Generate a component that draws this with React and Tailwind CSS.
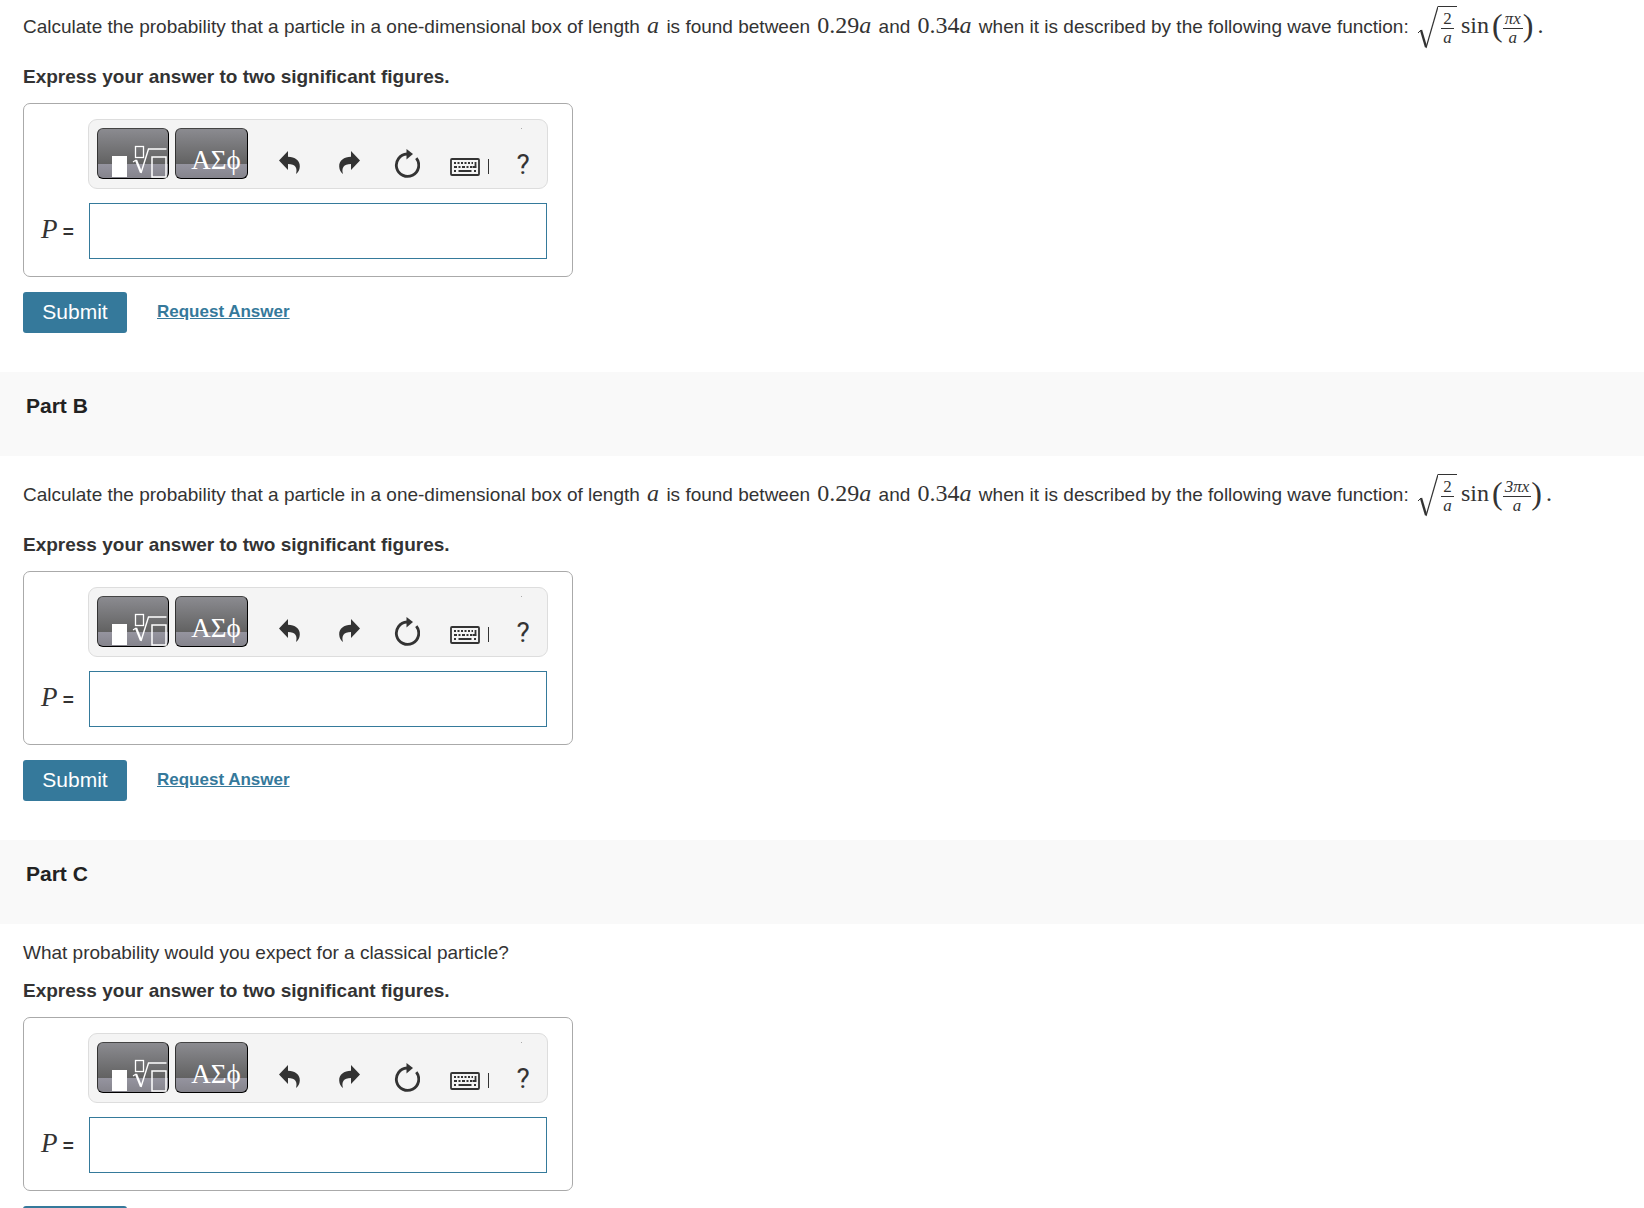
import React, { useState } from "react";

const parts = [
  { id: "A", wave: "πx" },
  { id: "B", title: "Part B", wave: "3πx" },
  { id: "C", title: "Part C" },
];

const Num = ({ children }) => (
  <span className="mx-[2px] font-['Liberation_Serif',serif] text-[24px] leading-none">{children}</span>
);

const Fraction = ({ top, bottom }) => (
  <span className="inline-flex flex-col items-center text-[17px] leading-[17px]">
    <span className="px-[2px] pb-px border-b border-[#333]">{top}</span>
    <span className="italic">{bottom}</span>
  </span>
);

// sqrt(2/a) sin(n pi x / a)
const WaveFunction = ({ wave }) => (
  <span className="inline-flex items-center h-[45px] ml-1 align-middle font-['Liberation_Serif',serif] text-[24px] leading-none">
    <svg width="20" height="45" viewBox="0 0 20 45" fill="none" stroke="#333">
      <path d="M0 28L3 25" strokeWidth="1" />
      <path d="M3 25L8 42" strokeWidth="2.4" />
      <path d="M8 43L20 1.5" strokeWidth="1.2" />
    </svg>
    <span className="flex items-center justify-center w-[19px] h-[43px] border-t border-[#333]">
      <Fraction top="2" bottom="a" />
    </span>
    <span className="ml-1 mr-[3px] pb-[6px]">sin</span>
    <span className="pb-[6px] text-[32px]">(</span>
    <Fraction top={<i>{wave}</i>} bottom="a" />
    <span className="pb-[6px] text-[32px]">)</span>
    <span className="ml-1 pb-[6px]">.</span>
  </span>
);

const TemplateIcon = () => (
  <svg width="70" height="49" viewBox="0 0 70 49" fill="none" stroke="#fff" aria-hidden="true">
    <rect x="14" y="27" width="15" height="21" fill="#fff" stroke="none" />
    <rect x="37.5" y="17.5" width="8" height="11" strokeWidth="1.3" />
    <path d="M35 33L38 31" strokeWidth="1.2" />
    <path d="M38 31L43 43.500" strokeWidth="2.2" />
    <path d="M43 44L50.500 20H68.500" strokeWidth="1.4" />
    <rect x="54" y="28" width="14" height="20" strokeWidth="1.500" />
  </svg>
);

const ArrowIcon = ({ flip }) => (
  <svg
    width="21"
    height="23"
    viewBox="0 0 21 23"
    fill="#333"
    className={flip ? "-scale-x-100" : ""}
    aria-hidden="true"
  >
    <path d="M0 9.500L9 0V5.800C16 6 21 9.500 20.800 15.500C20.700 19 19 21.500 17 23C18.700 17 16.500 13 9 13V19Z" />
  </svg>
);

const ResetIcon = () => (
  <svg width="26" height="29" viewBox="0 0 26 29" aria-hidden="true">
    <path d="M13 5A11.200 11.200 0 1 0 22.300 9.200" fill="none" stroke="#333" strokeWidth="2.800" />
    <path d="M12.500 0L19 5L12.500 10.500Z" fill="#333" />
  </svg>
);

const KeyboardIcon = () => (
  <svg width="39" height="18" viewBox="0 0 39 18" fill="none" stroke="#333" aria-hidden="true">
    <rect x="1" y="1" width="28" height="16" rx="1" strokeWidth="1.8" />
    <path d="M4 5H23M4 13H6.500M24 13H26.500" strokeWidth="2" strokeDasharray="2 1.500" />
    <path d="M4 9H22" strokeWidth="2" strokeDasharray="3 1.500 2 1.500" />
    <path d="M25.500 4V10M22.500 9H26.500" strokeWidth="1.800" />
    <path d="M8.500 13H21.500" strokeWidth="2" />
    <path d="M38.500 1V16" strokeWidth="1" />
  </svg>
);

const darkButton =
  "h-[51px] rounded-[6px] border border-black border-t-[#444] border-l-[#333] bg-[linear-gradient(#8b8b90_0%,#626262_71%,#95949f_72%,#85848c_100%)] text-white";

const Toolbar = () => (
  <div className="flex h-[70px] w-[460px] pl-2 pt-2 rounded-[9px] border border-[#ddd] bg-[#f4f4f4]">
    <button type="button" aria-label="Templates" className={`${darkButton} w-[72px]`}>
      <TemplateIcon />
    </button>
    <button
      type="button"
      aria-label="Symbols"
      className={`${darkButton} ml-[6px] w-[73px] pl-[9px] pt-[14px] font-['Liberation_Serif',serif] text-[27px] leading-none`}
    >
      ΑΣϕ
    </button>
    <button type="button" aria-label="Undo" className="flex justify-center ml-[11px] w-[60px] pt-[23px]">
      <ArrowIcon />
    </button>
    <button type="button" aria-label="Redo" className="flex justify-center w-[60px] pt-[23px]">
      <ArrowIcon flip />
    </button>
    <button type="button" aria-label="Reset" className="flex justify-center w-[55px] pt-[21px]">
      <ResetIcon />
    </button>
    <button type="button" aria-label="Keyboard" className="flex justify-center w-[71px] pt-[30px]">
      <KeyboardIcon />
    </button>
    <button
      type="button"
      aria-label="Help"
      className="relative w-9 pt-[14px] font-['Roboto',sans-serif] text-[28px] leading-none text-[#333]"
    >
      <span className="absolute left-4 top-0 size-px bg-[#aaa]" />
      ?
    </button>
  </div>
);

const AnswerBox = ({ id }) => {
  const [value, setValue] = useState("");

  return (
    <form onSubmit={(e) => e.preventDefault()}>
      <div className="w-[550px] h-[174px] pt-[15px] rounded-[7px] border border-[#aaa]">
        <div className="ml-16">
          <Toolbar />
        </div>
        <div className="flex items-center mt-[14px]">
          <label htmlFor={`answer-${id}`} className="w-[65px] pl-[17px] text-[19px] whitespace-nowrap">
            <i className="font-['Liberation_Serif',serif] text-[27px] leading-none">P</i>
            <b> =</b>
          </label>
          <input
            id={`answer-${id}`}
            type="text"
            value={value}
            onChange={(e) => setValue(e.target.value)}
            className="w-[458px] h-14 px-3 border border-[#357a9b] bg-white outline-none"
          />
        </div>
      </div>
      <div className="flex items-center mt-[15px]">
        <button type="submit" className="w-[104px] h-[41px] pb-[2px] rounded-[3px] bg-[#35799b] text-[21px] text-white">
          Submit
        </button>
        <a href="#request" className="ml-[30px] pb-[2px] text-[17px] font-bold text-[#35799b] underline">
          Request Answer
        </a>
      </div>
    </form>
  );
};

const Question = ({ part }) => (
  <section>
    {part.title && (
      <h2 className="h-[84px] pl-[26px] pt-[22px] bg-[#f9f9f9] text-[21px] leading-6 font-bold text-[#222]">
        {part.title}
      </h2>
    )}
    <div className={`px-[23px] pb-[39px] ${part.title ? "pt-[17px]" : "pt-[5px]"}`}>
      {part.wave ? (
        <p className="text-[19px] leading-[23px]">
          Calculate the probability that a particle in a one-dimensional box of length{" "}
          <Num><i>a</i></Num> is found between <Num>0.29<i>a</i></Num> and{" "}
          <Num>0.34<i>a</i></Num> when it is described by the following wave function:{" "}
          <WaveFunction wave={part.wave} />
        </p>
      ) : (
        <p className="text-[19px] leading-[23px]">
          What probability would you expect for a classical particle?
        </p>
      )}
      <p className="my-[14px] text-[19px] leading-[25px] font-bold">
        Express your answer to two significant figures.
      </p>
      <AnswerBox id={part.id} />
    </div>
  </section>
);

export default function App() {
  return (
    <main className="bg-white font-['Liberation_Sans',sans-serif] text-[#333]">
      {parts.map((part) => (
        <Question key={part.id} part={part} />
      ))}
    </main>
  );
}
